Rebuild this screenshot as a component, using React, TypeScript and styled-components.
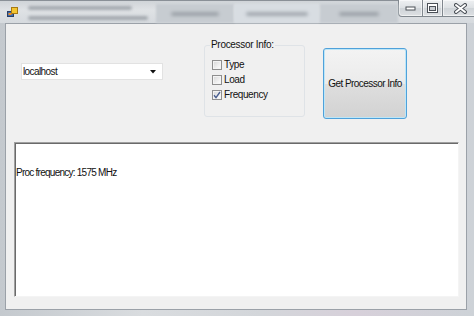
import React from 'react';
import styled, { createGlobalStyle } from 'styled-components';

const GlobalStyle = createGlobalStyle`
  html, body {
    margin: 0;
    padding: 0;
    width: 474px;
    height: 316px;
    overflow: hidden;
  }
  body {
    font-family: "Liberation Sans", Arial, sans-serif;
    font-size: 10px;
    color: #111;
  }
`;

const AppIcon = () => (
  <svg width="11" height="10" viewBox="0 0 11 10">
    <rect x="0.5" y="4.5" width="6" height="5" fill="#3d6fb0" stroke="#2a3f66" />
    <rect x="4.5" y="0.5" width="6" height="6" fill="#f3c531" stroke="#a77a13" />
    <rect x="1.5" y="6" width="3" height="2" fill="#f08a24" />
  </svg>
);

const MinimizeGlyph = () => (
  <svg width="11" height="5" viewBox="0 0 11 5">
    <rect x="1" y="1" width="9" height="3" fill="#fff" stroke="#4b5057" />
  </svg>
);

const MaximizeGlyph = () => (
  <svg width="11" height="10" viewBox="0 0 11 10">
    <rect x="0.5" y="0.5" width="10" height="9" fill="#fff" stroke="#4b5057" />
    <rect x="2.5" y="3.5" width="6" height="4" fill="#c9cdd2" stroke="#4b5057" />
  </svg>
);

const CloseGlyph = () => (
  <svg width="13" height="11" viewBox="0 0 13 11">
    <path d="M2 2 L11 9 M11 2 L2 9" stroke="#4b5057" strokeWidth="4" strokeLinecap="round" />
    <path d="M2 2 L11 9 M11 2 L2 9" stroke="#fff" strokeWidth="2" strokeLinecap="round" />
  </svg>
);

const CheckMark = () => (
  <svg width="8" height="8" viewBox="0 0 8 8">
    <path d="M1 4.2 L3 6.6 L7 1" stroke="#4a5f90" strokeWidth="1.4" fill="none" />
  </svg>
);

const DropArrow = () => (
  <svg width="6" height="4" viewBox="0 0 6 4">
    <path d="M0 0 L6 0 L3 3.5 Z" fill="#111" />
  </svg>
);

const App = () => {
  return (
    <>
      <GlobalStyle />
      <Window>
        <TitleBar>
          <IconSlot>
            <AppIcon />
          </IconSlot>
          <GhostLines>
            <Ghost width={104} />
            <Ghost width={120} />
          </GhostLines>
          <Tabs>
            <Tab>
              <Ghost width={48} />
            </Tab>
            <Tab light>
              <Ghost width={62} />
            </Tab>
            <Tab>
              <Ghost width={40} />
            </Tab>
          </Tabs>
          <CaptionButtons>
            <CaptionButton width={25} first>
              <MinimizeGlyph />
            </CaptionButton>
            <CaptionButton width={20}>
              <MaximizeGlyph />
            </CaptionButton>
            <CaptionButton width={36} last>
              <CloseGlyph />
            </CaptionButton>
          </CaptionButtons>
        </TitleBar>
        <FrameBody>
          <Client>
            <TopRow>
              <ComboBox>
                <ComboText>localhost</ComboText>
                <DropArrow />
              </ComboBox>
              <GroupBox>
                <Legend>Processor Info:</Legend>
                <CheckRow>
                  <CheckBox />
                  <CheckLabel>Type</CheckLabel>
                </CheckRow>
                <CheckRow>
                  <CheckBox />
                  <CheckLabel>Load</CheckLabel>
                </CheckRow>
                <CheckRow>
                  <CheckBox checked>
                    <CheckMark />
                  </CheckBox>
                  <CheckLabel>Frequency</CheckLabel>
                </CheckRow>
              </GroupBox>
              <ActionButton>Get Processor Info</ActionButton>
            </TopRow>
            <OutputBox>Proc frequency: 1575 MHz</OutputBox>
          </Client>
        </FrameBody>
      </Window>
    </>
  );
};

const Window = styled.div`
  width: 474px;
  height: 316px;
  display: flex;
  flex-direction: column;
  box-sizing: border-box;
  border-top: 1px solid #8a9097;
  background: linear-gradient(
    90deg,
    #c4c9ce 0%,
    #d9dcdf 30%,
    #d3d6da 55%,
    #d7d0da 75%,
    #cdd2d7 100%
  );
`;

const TitleBar = styled.div`
  height: 22px;
  display: flex;
  align-items: flex-start;
  background: linear-gradient(180deg, #d0d4d8 0%, #dfe2e5 40%, #d6dade 100%);
`;

const IconSlot = styled.div`
  margin: 6px 0 0 7px;
  display: flex;
`;

const GhostLines = styled.div`
  display: flex;
  flex-direction: column;
  gap: 6px;
  margin: 5px 0 0 10px;
  width: 140px;
`;

const Ghost = styled.div<{ width: number }>`
  width: ${(p) => p.width}px;
  height: 4px;
  border-radius: 2px;
  background: #7f868e;
  opacity: 0.6;
  filter: blur(1.6px);
`;

const Tabs = styled.div`
  display: flex;
  margin: 3px 0 0 8px;
  height: 19px;
`;

const Tab = styled.div<{ light?: boolean }>`
  width: ${(p) => (p.light ? 86 : 78)}px;
  display: flex;
  align-items: center;
  justify-content: center;
  background: ${(p) => (p.light ? '#d8dde2' : '#c7ccd1')};
  filter: blur(1px);
`;

const CaptionButtons = styled.div`
  display: flex;
  margin-left: auto;
  margin-right: 7px;
  margin-top: -1px;
  height: 17px;
`;

const CaptionButton = styled.div<{ width: number; first?: boolean; last?: boolean }>`
  width: ${(p) => p.width}px;
  display: flex;
  align-items: center;
  justify-content: center;
  box-sizing: border-box;
  border: 1px solid #80878e;
  border-top: none;
  border-left-width: ${(p) => (p.first ? 1 : 0)}px;
  border-radius: ${(p) => (p.first ? '0 0 0 4px' : p.last ? '0 0 4px 0' : '0')};
  background: linear-gradient(180deg, #eef0f2 0%, #dde1e4 50%, #cfd4d8 51%, #dde0e3 100%);
  box-shadow: inset 0 0 0 1px rgba(255, 255, 255, 0.55);
`;

const FrameBody = styled.div`
  flex: 1;
  display: flex;
  padding: 0 7px 6px 5px;
`;

const Client = styled.div`
  flex: 1;
  display: flex;
  flex-direction: column;
  border: 1px solid #9ba1a8;
  background: #f0f0f0;
`;

const TopRow = styled.div`
  height: 118px;
  display: flex;
  align-items: flex-start;
  flex-shrink: 0;
`;

const ComboBox = styled.div`
  margin: 39px 0 0 15px;
  width: 142px;
  height: 17px;
  box-sizing: border-box;
  border: 1px solid #e2e2e2;
  background: #fff;
  display: flex;
  align-items: center;
  padding: 0 6px 0 1px;
`;

const ComboText = styled.span`
  flex: 1;
  letter-spacing: -0.6px;
`;

const GroupBox = styled.fieldset`
  margin: 16px 0 0 41px;
  width: 101px;
  height: 77px;
  box-sizing: border-box;
  padding: 7px 0 0 5px;
  border: 1px solid #dfe3e7;
  border-radius: 3px;
  display: flex;
  flex-direction: column;
`;

const Legend = styled.legend`
  padding: 0 1px;
  line-height: 10px;
  letter-spacing: -0.3px;
`;

const CheckRow = styled.div`
  height: 15px;
  display: flex;
  align-items: center;
  gap: 2px;
  padding-left: 2px;
`;

const CheckBox = styled.div<{ checked?: boolean }>`
  width: 10px;
  height: 10px;
  box-sizing: border-box;
  border: 1px solid #8f8f8f;
  background: linear-gradient(135deg, #d6d6d6 0%, #f4f4f4 70%, #ffffff 100%);
  box-shadow: inset 0 0 0 1px #f4f4f4;
  display: flex;
  align-items: center;
  justify-content: center;
`;

const CheckLabel = styled.span`
  letter-spacing: -0.4px;
  line-height: 12px;
`;

const ActionButton = styled.button`
  margin: 24px 0 0 18px;
  width: 84px;
  height: 71px;
  box-sizing: border-box;
  padding: 0;
  border: 1px solid #4fa1da;
  border-radius: 3px;
  box-shadow: inset 0 0 0 1px #bde6f7;
  background: linear-gradient(180deg, #f3f3f3 0%, #ebebeb 50%, #dedede 51%, #d2d2d2 100%);
  font-family: "Liberation Sans", Arial, sans-serif;
  font-size: 10px;
  letter-spacing: -0.55px;
  color: #111;
`;

const OutputBox = styled.div`
  flex: 1;
  margin: 0 7px 12px 8px;
  box-sizing: border-box;
  border: 1px solid;
  border-color: #a0a0a0 #f4f4f4 #f4f4f4 #a0a0a0;
  box-shadow: inset 1px 1px 0 #6a6a6a;
  background: #fff;
  padding: 24px 0 0 1px;
  line-height: 12px;
  letter-spacing: -0.75px;
`;

export default App;
